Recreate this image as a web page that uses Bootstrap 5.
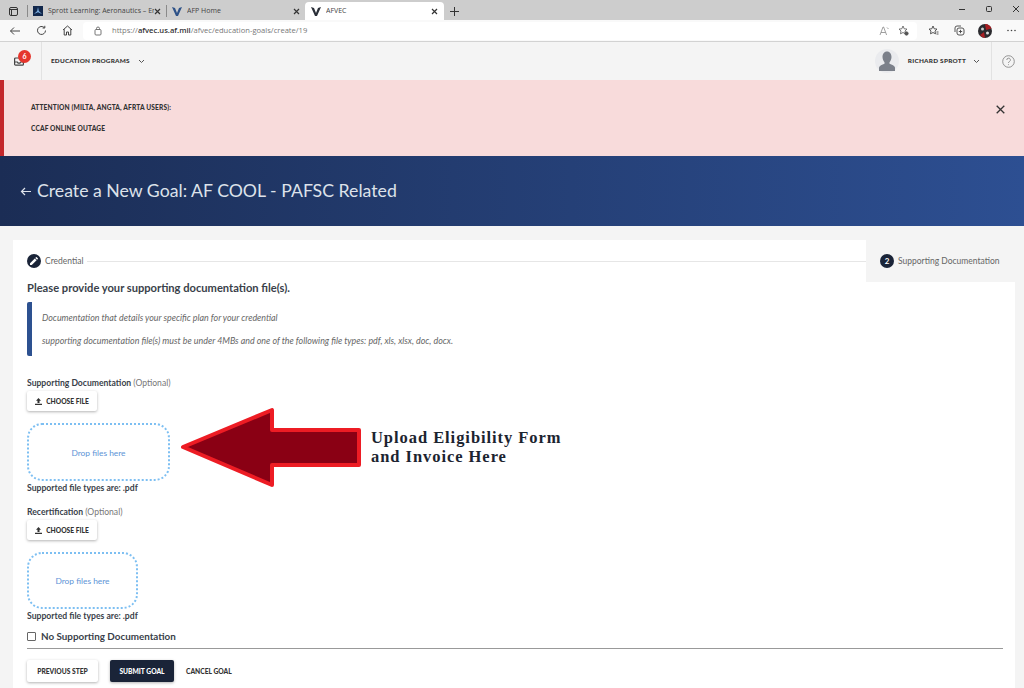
<!DOCTYPE html>
<html lang="en">
<head>
<meta charset="UTF-8">
<meta name="viewport" content="width=device-width, initial-scale=1.0">
<title>AFVEC</title>
<link href="https://cdn.jsdelivr.net/npm/bootstrap@5.3.3/dist/css/bootstrap.min.css" rel="stylesheet">
<script src="https://cdn.jsdelivr.net/npm/bootstrap@5.3.3/dist/js/bootstrap.bundle.min.js"></script>
<style>
html, body { height: 688px; overflow: hidden; }
body { background: #f4f4f4; font-family: Lato, "Liberation Sans", sans-serif; color: #3a3f4a; position: relative; }
svg { display: block; flex: none; }

/* browser chrome */
.tabbar { height: 20px; background: #cdcdcd; padding-top: 2px; font-size: 8px; color: #444; font-family: "Open Sans", sans-serif; }
.win-btn { width: 27px; }
.win-ctrls { margin-right: -5px; padding-bottom: 4px; }
.tabsep { width: 1px; height: 12px; background: #8a8a8a; }
.tabitem { height: 18px; padding: 0 5px; border-radius: 4px 4px 0 0; }
.tabitem.tab-one, .tabitem.tab-two { width: 138px; }
.tabitem.tab-on { width: 139px; padding: 0 6px; background: #fff; }
.tabtitle { flex: 1; margin-left: 5px; font-size: 7px; white-space: nowrap; overflow: hidden; }
.plusicon { margin-left: 5px; }
.addrbar { height: 22px; padding-left: 2px; background: #f9f9f9; border-bottom: 1px solid #d2d2d2; font-family: "Open Sans", sans-serif; }
.navicon { width: 26px; }
.urlbox { width: 834px; height: 18px; background: #fff; border-radius: 4px; margin-left: 3px; padding: 0 8px 0 11px; font-size: 7.600px; color: #777; }
.urlbox b { color: #333; font-weight: 600; }
.urltext { margin-left: 10px; }
.tools { margin-left: 3px; }
.tool-slot { width: 26px; }

/* app header */
.apphead { height: 38px; background: #f4f4f4; }
.apphead-cell { height: 38px; }
.mailcell { width: 42px; border-right: 1px solid #e2e2e2; position: relative; }
.msgcount { position: absolute; left: 18px; top: 8px; width: 13px; height: 13px; border-radius: 50%; background: #e5352c; color: #fff; font-size: 7px; font-weight: 700; line-height: 13px; text-align: center; }
.headlabel { font-size: 6.400px; font-weight: 900; color: #333; letter-spacing: .2px; white-space: nowrap; }
.prog-label { margin-left: 9px; }
.user-label { margin-left: 9px; letter-spacing: .25px; }
.user-chevron { margin: 0 11px 0 7px; }
.helpcell { width: 33px; border-left: 1px solid #e2e2e2; }

/* alert */
.outage { height: 76px; background: #f8dbdb; border-left: 4px solid #c3272b; padding: 0 19px 0 27px; font-size: 6.600px; font-weight: 900; color: #333; letter-spacing: .15px; }
.outage p { margin: 0; line-height: 8px; }
.outage p + p { margin-top: 13px; }
.outage-text { padding-bottom: 2px; }
.outage-close { margin-bottom: 18px; }

/* hero */
.goalhero { height: 70px; background: linear-gradient(90deg, #1b2d55 0%, #2d4f92 100%); color: #dde2ea; padding-left: 20px; font-size: 17.700px; }
.goalhero h1 { font-size: inherit; font-weight: 400; margin: 0 0 0 6px; white-space: nowrap; }

/* form card */
.goalcard { margin: 14px 9px 0 13px; background: #fff; height: 448px; position: relative; }
.stepper { height: 42px; padding-left: 14px; margin-right: -9px; font-size: 8.500px; color: #666; }
.stepdot { width: 14px; height: 14px; border-radius: 50%; background: #1a2438; color: #fff; font-size: 8px; font-weight: 700; }
.stepline { flex: 1; height: 1px; background: #e6e6e6; margin: 0 -9px 0 4px; }
.steplast { width: 158px; height: 42px; background: #f4f4f4; padding-left: 14px; white-space: nowrap; }
.formbody { padding: 0 12px 0 14px; }
.formbody h2 { font-size: 11.150px; font-weight: 700; margin: 0; line-height: 12px; }
.hintbox { border-left: 5px solid #2d5190; border-radius: 2px; height: 54px; margin: 8px 0 0; padding-left: 10px; font-size: 8.900px; font-style: italic; color: #666; }
.hintbox p { margin: 0; line-height: 11px; }
.hintbox p + p { margin-top: 12px; }
.fieldlabel { font-size: 8.600px; font-weight: 700; line-height: 11px; margin: 0; }
.fieldlabel.first-field { margin-top: 22px; }
.fieldlabel.next-field { margin-top: 14px; }
.fieldlabel span { font-weight: 400; color: #777; }
.btn.pickbtn, .btn.stepbtn { font-size: 6.700px; font-weight: 900; color: #333; background: #fff; border: 0; border-radius: 2px; box-shadow: 0 1px 3px rgba(0,0,0,.3); padding: 0; height: 20px; }
.btn.pickbtn { width: 70px; margin-top: 2px; }
.dropbox { margin-top: 12px; padding-top: 2px; border: 2px dotted #7dbff2; border-radius: 15px; color: #5c93d6; font-size: 8.400px; }
.dropbox.wide { width: 143px; height: 58px; }
.dropbox.narrow { width: 111px; height: 57px; }
.filetypes { font-size: 8.650px; font-weight: 700; line-height: 11px; margin: 1px 0 0; }
.nodoc { font-size: 9.850px; font-weight: 700; line-height: 12px; margin: 9px 0 0; min-height: 0; padding: 0; }
.nodoc .form-check-input { float: none; width: 9px; height: 9px; margin: 0 5px 0 0; border: 1px solid #666; border-radius: 1px; }
.formrule { margin: 6px 0 0; border-top: 1px solid #999; opacity: 1; }
.formbtns { margin-top: 11px; }
.btn.stepbtn { height: 22px; width: 71px; }
.btn.stepbtn.submitbtn { width: 64px; margin-left: 12px; background: #1a2438; color: #fff; }
.canceltxt { font-size: 6.700px; font-weight: 900; color: #333; margin-left: 12px; }

/* annotation pasted over the form */
.callout-arrow { position: absolute; left: 178px; top: 404px; }
.callout-text { position: absolute; left: 371px; top: 428px; font-family: "Liberation Serif", serif; font-weight: 700; font-size: 16.500px; letter-spacing: .95px; line-height: 19px; color: #1c2430; white-space: nowrap; }
</style>
</head>
<body>

<!-- browser window -->
<div class="tabbar d-flex align-items-center">
  <div class="win-btn d-flex justify-content-center">
    <svg width="11" height="11" viewBox="0 0 11 11" fill="none" stroke="#333" stroke-width="1"><rect x="1.5" y="1.5" width="8" height="8" rx="1.5"/><path d="M1.5 3.5h8M3.5 3.5v6"/></svg>
  </div>
  <div class="tabsep"></div>
  <div class="tabitem tab-one d-flex align-items-center">
    <svg width="10" height="10" viewBox="0 0 10 10"><rect width="10" height="10" fill="#12284c"/><path d="M5 1 5.800 5 9 8 5 6.200 1 8 4.200 5z" fill="#7fb2e5"/></svg>
    <span class="tabtitle">Sprott Learning: Aeronautics – Er</span>
    <svg width="7" height="7" viewBox="0 0 7 7" stroke="#333" stroke-width="1.2"><path d="M1 1l5 5M6 1L1 6"/></svg>
  </div>
  <div class="tabsep"></div>
  <div class="tabitem tab-two d-flex align-items-center">
    <svg width="10" height="9" viewBox="0 0 10 9" fill="#2e5288"><path d="M0 0l3 1 2 5 2-5 3-1-4 9H4z"/></svg>
    <span class="tabtitle">AFP Home</span>
    <svg width="7" height="7" viewBox="0 0 7 7" stroke="#333" stroke-width="1.2"><path d="M1 1l5 5M6 1L1 6"/></svg>
  </div>
  <div class="tabitem tab-on d-flex align-items-center">
    <svg width="10" height="9" viewBox="0 0 10 9" fill="#2a2f38"><path d="M0 0l3 1 2 5 2-5 3-1-4 9H4z"/></svg>
    <span class="tabtitle">AFVEC</span>
    <svg width="7" height="7" viewBox="0 0 7 7" stroke="#333" stroke-width="1.2"><path d="M1 1l5 5M6 1L1 6"/></svg>
  </div>
  <svg class="plusicon" width="11" height="11" viewBox="0 0 11 11" stroke="#333" stroke-width="1"><path d="M5.500 1v9M1 5.500h9"/></svg>
  <div class="ms-auto win-ctrls d-flex align-items-center">
    <div class="win-btn d-flex justify-content-center"><svg width="8" height="8" viewBox="0 0 8 8" stroke="#333"><path d="M1 4.500h6"/></svg></div>
    <div class="win-btn d-flex justify-content-center"><svg width="8" height="8" viewBox="0 0 8 8" fill="none" stroke="#333"><rect x="1.500" y="1.500" width="5" height="5" rx="1"/></svg></div>
    <div class="win-btn d-flex justify-content-center"><svg width="8" height="8" viewBox="0 0 8 8" stroke="#333"><path d="M1 1l6 6M7 1L1 7"/></svg></div>
  </div>
</div>
<div class="addrbar d-flex align-items-center">
  <div class="navicon d-flex justify-content-center"><svg width="12" height="10" viewBox="0 0 12 10" fill="none" stroke="#444" stroke-width="1"><path d="M11 5H1.500M5 1.500 1.500 5 5 8.500"/></svg></div>
  <div class="navicon d-flex justify-content-center"><svg width="11" height="11" viewBox="0 0 11 11" fill="none" stroke="#444" stroke-width="1"><path d="M9.500 5.500a4 4 0 1 1-1.200-2.900M8.800 .8v2.200H6.600"/></svg></div>
  <div class="navicon d-flex justify-content-center"><svg width="11" height="11" viewBox="0 0 11 11" fill="none" stroke="#444" stroke-width="1"><path d="M1 5 5.500 1 10 5M2.200 4.200V10h2.300V7h2v3h2.300V4.200"/></svg></div>
  <div class="urlbox d-flex align-items-center">
    <svg width="8" height="10" viewBox="0 0 8 10" fill="none" stroke="#666" stroke-width=".9"><rect x="1" y="3.500" width="6" height="5.500" rx="1"/><path d="M2.500 3.500V2.500a1.500 1.500 0 0 1 3 0v1"/></svg>
    <span class="urltext">https://<b>afvec.us.af.mil</b>/afvec/education-goals/create/19</span>
    <svg class="ms-auto" width="11" height="10" viewBox="0 0 11 10" fill="none" stroke="#888" stroke-width=".8"><path d="M1 9 4 1h.6l3 8M2 6.500h4.500M8 1.500l1.500 1.500"/></svg>
    <svg class="ms-2" width="11" height="11" viewBox="0 0 11 11" fill="none" stroke="#555" stroke-width=".8"><path d="M5 1 6.200 3.800 9 4.100 7 6l.5 2.800L5 7.500 2.500 8.800 3 6 1 4.100l2.800-.3z"/><circle cx="8.500" cy="8.500" r="1.700" fill="#555"/></svg>
  </div>
  <div class="tool-slot tools d-flex justify-content-center"><svg width="11" height="11" viewBox="0 0 11 11" fill="none" stroke="#444" stroke-width=".9"><path d="M5 1 6.200 3.800 9 4.100 7 6l.5 2.800L5 7.500 2.500 8.800 3 6 1 4.100l2.800-.3zM8.500 7h2M8.500 9h2"/></svg></div>
  <div class="tool-slot d-flex justify-content-center"><svg width="11" height="11" viewBox="0 0 11 11" fill="none" stroke="#444" stroke-width=".9"><rect x="3" y="3" width="7" height="7" rx="2"/><path d="M1 7V3a2 2 0 0 1 2-2h4M6.500 4.800v3.400M4.800 6.500h3.400"/></svg></div>
  <div class="tool-slot d-flex justify-content-center"><svg width="14" height="14" viewBox="0 0 14 14"><circle cx="7" cy="7" r="7" fill="#2b2b2f"/><path d="M7 0a7 7 0 0 1 6.500 4.500L8 6zM2 11l4-3 1 6a7 7 0 0 1-5-3z" fill="#a81e22"/><circle cx="4.500" cy="5" r="1.500" fill="#ccc"/><circle cx="9.500" cy="9" r="1.500" fill="#ddd"/></svg></div>
  <div class="tool-slot d-flex justify-content-center"><svg width="9" height="3" viewBox="0 0 9 3" fill="#444"><circle cx="1" cy="1.500" r=".8"/><circle cx="4.500" cy="1.500" r=".8"/><circle cx="8" cy="1.500" r=".8"/></svg></div>
</div>

<!-- app header -->
<div class="apphead d-flex align-items-center">
  <div class="apphead-cell mailcell d-flex align-items-center justify-content-center pe-1">
    <svg width="10" height="9" viewBox="0 0 10 9" fill="none" stroke="#444" stroke-width="1.200"><rect x=".6" y="1" width="8.800" height="7.200" rx="1"/><path d="M.6 5h2.700l.8 1.200h1.800L6.700 5h2.700"/></svg>
    <span class="msgcount">6</span>
  </div>
  <span class="headlabel prog-label">EDUCATION PROGRAMS</span>
  <svg class="ms-2" width="7" height="5" viewBox="0 0 7 5" fill="none" stroke="#555" stroke-width="1"><path d="M1 1l2.500 2.500L6 1"/></svg>
  <div class="ms-auto d-flex align-items-center">
    <svg width="24" height="24" viewBox="0 0 24 24"><circle cx="12" cy="12" r="12" fill="#eaebee"/><path d="M12 2.500c3 0 4.500 2.500 4.500 5.500 0 2.200-1 4.200-2 5.200v1.500c2.500 1 5 1.800 5.500 3.800v3.500H4v-3.500c.500-2 3-2.800 5.500-3.800v-1.500c-1-1-2-3-2-5.200 0-3 1.500-5.500 4.500-5.500z" fill="#7b808a"/></svg>
    <span class="headlabel user-label">RICHARD SPROTT</span>
    <svg class="user-chevron" width="7" height="5" viewBox="0 0 7 5" fill="none" stroke="#555" stroke-width="1"><path d="M1 1l2.500 2.500L6 1"/></svg>
  </div>
  <div class="apphead-cell helpcell d-flex align-items-center justify-content-center">
    <svg width="13" height="13" viewBox="0 0 13 13" fill="none" stroke="#888" stroke-width=".9"><circle cx="6.500" cy="6.500" r="5.800"/><path d="M4.800 5a1.800 1.800 0 1 1 2.700 1.500c-.7.400-1 .8-1 1.500M6.500 9.300v.8"/></svg>
  </div>
</div>

<!-- outage alert -->
<div class="outage d-flex align-items-center justify-content-between">
  <div class="outage-text">
    <p>ATTENTION (MILTA, ANGTA, AFRTA USERS):</p>
    <p>CCAF ONLINE OUTAGE</p>
  </div>
  <svg class="outage-close" width="9" height="9" viewBox="0 0 9 9" stroke="#333" stroke-width="1.300"><path d="M.7.7l7.600 7.600M8.300.7.700 8.300"/></svg>
</div>

<!-- page title -->
<div class="goalhero d-flex align-items-center">
  <svg width="11" height="9" viewBox="0 0 11 9" fill="none" stroke="#dde2ea" stroke-width="1.200"><path d="M11 4.500H1.500M5 1 1.500 4.500 5 8"/></svg>
  <h1>Create a New Goal: AF COOL - PAFSC Related</h1>
</div>

<!-- form -->
<div class="goalcard">
  <div class="stepper d-flex align-items-center">
    <div class="stepdot d-flex align-items-center justify-content-center">
      <svg width="8" height="8" viewBox="0 0 8 8" fill="#fff"><path d="M0 8V6.200L4.800 1.400l1.800 1.800L1.800 8zM5.300 .9 6 .2a.6.6 0 0 1 .8 0l1 1a.6.6 0 0 1 0 .8l-.7.7z"/></svg>
    </div>
    <span class="ms-1">Credential</span>
    <div class="stepline"></div>
    <div class="steplast d-flex align-items-center">
      <div class="stepdot d-flex align-items-center justify-content-center">2</div>
      <span class="ms-1">Supporting Documentation</span>
    </div>
  </div>
  <div class="formbody">
    <h2>Please provide your supporting documentation file(s).</h2>
    <div class="hintbox d-flex flex-column justify-content-center">
      <p>Documentation that details your specific plan for your credential</p>
      <p>supporting documentation file(s) must be under 4MBs and one of the following file types: pdf, xls, xlsx, doc, docx.</p>
    </div>

    <p class="fieldlabel first-field">Supporting Documentation <span>(Optional)</span></p>
    <button type="button" class="btn pickbtn d-flex align-items-center justify-content-center">
      <svg class="me-1" width="7" height="7" viewBox="0 0 7 7" fill="#333"><path d="M3.500 0 6 2.700H4.500V5h-2V2.700H1zM0 5.800h7V7H0z"/></svg>CHOOSE FILE
    </button>
    <div class="dropbox wide d-flex align-items-center justify-content-center">Drop files here</div>
    <p class="filetypes">Supported file types are: .pdf</p>

    <p class="fieldlabel next-field">Recertification <span>(Optional)</span></p>
    <button type="button" class="btn pickbtn d-flex align-items-center justify-content-center">
      <svg class="me-1" width="7" height="7" viewBox="0 0 7 7" fill="#333"><path d="M3.500 0 6 2.700H4.500V5h-2V2.700H1zM0 5.800h7V7H0z"/></svg>CHOOSE FILE
    </button>
    <div class="dropbox narrow d-flex align-items-center justify-content-center">Drop files here</div>
    <p class="filetypes">Supported file types are: .pdf</p>

    <div class="form-check nodoc d-flex align-items-center">
      <input class="form-check-input" type="checkbox" id="noDoc">
      <label class="form-check-label" for="noDoc">No Supporting Documentation</label>
    </div>
    <hr class="formrule">
    <div class="formbtns d-flex align-items-center">
      <button type="button" class="btn stepbtn">PREVIOUS STEP</button>
      <button type="button" class="btn stepbtn submitbtn">SUBMIT GOAL</button>
      <span class="canceltxt">CANCEL GOAL</span>
    </div>
  </div>
</div>

<!-- annotation -->
<svg class="callout-arrow" width="186" height="86" viewBox="178 404 186 86">
  <path d="M183 447 272 410V430H359V465H272V485z" fill="#8a0014" stroke="#ed1c24" stroke-width="4" stroke-linejoin="round"/>
</svg>
<div class="callout-text">Upload Eligibility Form<br>and Invoice Here</div>

</body>
</html>
